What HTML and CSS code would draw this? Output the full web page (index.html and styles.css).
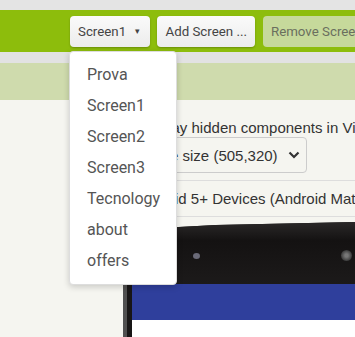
FILE: index.html
```html
<!DOCTYPE html>
<html lang="en">
<head>
    <meta charset="UTF-8">
    <meta name="viewport" content="width=device-width, initial-scale=1.0">
    <title>Designer</title>
    <link rel="stylesheet" href="styles.css">
</head>
<body>
    <div class="top-strip"></div>
    <div class="toolbar">
        <button class="tool-btn screen-btn">Screen1 <span class="caret">&#9662;</span></button>
        <button class="tool-btn">Add Screen ...</button>
        <button class="tool-btn remove-btn">Remove Screen</button>
    </div>
    <div class="sub-strip"></div>
    <div class="sub-bar"></div>

    <div class="viewer">
        <label class="hidden-check">
            <input type="checkbox"> Display hidden components in Viewer
        </label>
        <div class="size-select">
            <span>Phone size (505,320)</span>
            <svg class="chevron" width="12" height="8" viewBox="0 0 12 8">
                <path d="M1.5 1.5 L6 6 L10.5 1.5" fill="none" stroke="#333" stroke-width="2.2"/>
            </svg>
        </div>
        <div class="device-select">Android 5+ Devices (Android Material)</div>

        <div class="phone">
            <div class="phone-top">
                <span class="camera"></span>
                <span class="speaker"></span>
            </div>
            <div class="screen">
                <div class="title-bar"></div>
                <div class="screen-body"></div>
            </div>
        </div>
    </div>

    <!-- screen picker menu, open -->
    <ul class="screen-menu">
        <li>Prova</li>
        <li>Screen1</li>
        <li>Screen2</li>
        <li>Screen3</li>
        <li>Tecnology</li>
        <li>about</li>
        <li>offers</li>
    </ul>
</body>
</html>
```

FILE: styles.css
```css
body {
    margin: 0;
    background-color: #f5f5f0;
    font-family: 'Liberation Sans', Arial, sans-serif;
    color: #333;
    overflow: hidden;
}
.top-strip {
    height: 10px;
    background-color: #e4e4e4;
}
.toolbar {
    height: 42px;
    background-color: #8dbd0c;
    display: flex;
    align-items: center;
    gap: 7px;
    padding-left: 70px;
    white-space: nowrap;
    overflow: hidden;
}
.tool-btn {
    flex-shrink: 0;
    height: 31px;
    padding: 0 8px;
    border: none;
    border-radius: 4px;
    background: linear-gradient(#fafafa, #ececec);
    box-shadow: 0 1px 2px rgba(0,0,0,0.25);
    font-family: Roboto, sans-serif;
    font-size: 13.3px;
    color: #444;
}
.screen-btn {
    padding: 0 10px 0 8px;
}
.caret {
    font-size: 9px;
    margin-left: 6px;
    vertical-align: 2px;
}
.remove-btn {
    margin-left: 1px;
    background: #c6d99b;
    color: #6a6f5e;
    box-shadow: none;
}
.sub-strip {
    height: 11px;
    background-color: #e2e2e2;
}
.sub-bar {
    height: 37px;
    background-color: #cfdbad;
}
.viewer {
    padding-top: 19px;
    padding-left: 117px;
    white-space: nowrap;
}
.hidden-check {
    display: block;
    font-size: 15px;
    line-height: 18px;
}
.hidden-check input {
    margin: 0 4px 0 0;
    width: 13px;
    height: 13px;
}
.size-select {
    display: flex;
    align-items: center;
    justify-content: space-between;
    box-sizing: border-box;
    width: 180px;
    height: 36px;
    margin-left: 10px;
    padding: 0 6px 0 7px;
    border: 1px solid #ccc;
    border-radius: 4px;
    background-color: #f5f5f0;
    font-size: 15px;
}
.chevron {
    flex-shrink: 0;
}
.device-select {
    margin-top: 7px;
    margin-left: 10px;
    height: 35px;
    line-height: 35px;
    padding-left: 8px;
    border-top: 1px solid #ddd;
    border-bottom: 1px solid #ddd;
    font-size: 15px;
    overflow: hidden;
}
.phone {
    margin-top: 5px;
    margin-left: 6px;
    border-left: 4px solid #505050;
    background-color: #181616;
    padding-left: 5px;
    clip-path: polygon(0 8px, 40% 3px, 100% 0, 100% 100%, 0 100%);
}
.phone-top {
    position: relative;
    height: 62px;
    margin-left: -5px;
    background: linear-gradient(#2a2828, #141212 30%, #1c1a1a);
}
.camera {
    position: absolute;
    left: 66px;
    top: 31px;
    width: 7px;
    height: 6px;
    border-radius: 50%;
    background-color: #6a6a78;
}
.speaker {
    position: absolute;
    left: 214px;
    top: 28px;
    width: 11px;
    height: 11px;
    border-radius: 50%;
    background: radial-gradient(#777 20%, #3a3a3a 70%);
}
.screen {
    height: 60px;
}
.title-bar {
    height: 36px;
    background-color: #2f3f9c;
}
.screen-body {
    height: 24px;
    background-color: #fff;
}
.screen-menu {
    position: absolute;
    left: 69px;
    top: 51px;
    width: 108px;
    box-sizing: border-box;
    margin: 0;
    padding: 7px 0 8px 17px;
    list-style: none;
    background-color: #fff;
    border: 1px solid #ddd;
    border-radius: 4px;
    box-shadow: 0 2px 6px rgba(0,0,0,0.18);
    font-family: Roboto, sans-serif;
    font-size: 16px;
    color: #555;
}
.screen-menu li {
    height: 31px;
    line-height: 31px;
}
```
